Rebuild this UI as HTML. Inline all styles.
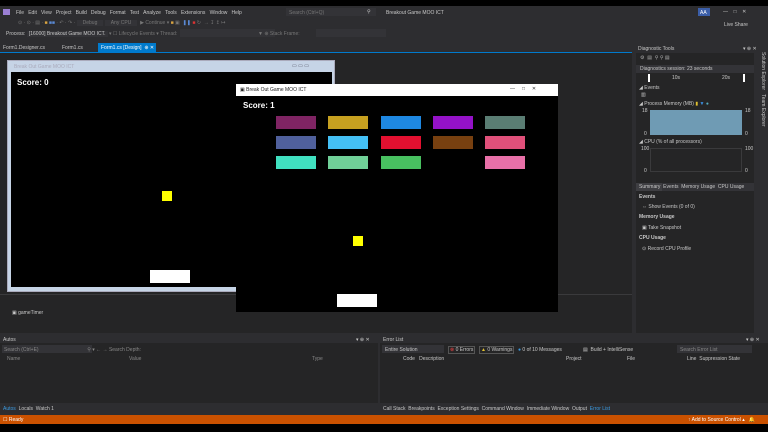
<!DOCTYPE html>
<html><head><meta charset="utf-8"><style>
*{margin:0;padding:0;box-sizing:border-box}
body{width:768px;height:432px;background:#000;position:relative;overflow:hidden;font-family:"Liberation Sans",sans-serif;color:#ccc;font-size:5px}
.a{position:absolute}
.t{position:absolute;white-space:nowrap;font-size:5px;color:#c8c8c8}
.brick{position:absolute;width:40px;height:13px}
</style></head><body>
<!-- top chrome -->
<div class="a" style="left:0;top:6px;width:768px;height:47px;background:#2d2d30"></div>
<div class="a" style="left:3px;top:9px;width:7px;height:6px;background:#9b7fd4"></div>
<div class="t" style="left:16px;top:10px">File&nbsp;&nbsp;&nbsp;Edit&nbsp;&nbsp;&nbsp;View&nbsp;&nbsp;&nbsp;Project&nbsp;&nbsp;&nbsp;Build&nbsp;&nbsp;&nbsp;Debug&nbsp;&nbsp;&nbsp;Format&nbsp;&nbsp;&nbsp;Test&nbsp;&nbsp;&nbsp;Analyze&nbsp;&nbsp;&nbsp;Tools&nbsp;&nbsp;&nbsp;Extensions&nbsp;&nbsp;&nbsp;Window&nbsp;&nbsp;&nbsp;Help</div>
<div class="a" style="left:286px;top:8px;width:90px;height:8px;background:#333337"></div>
<div class="t" style="left:289px;top:10px;color:#777">Search (Ctrl+Q)</div>
<div class="t" style="left:367px;top:9px">⚲</div>
<div class="t" style="left:386px;top:10px">Breakout Game MOO ICT</div>
<div class="a" style="left:698px;top:8px;width:12px;height:8px;background:#3b5ea8"></div>
<div class="t" style="left:700px;top:10px;color:#fff">AA</div>
<div class="t" style="left:723px;top:9px">—&nbsp;&nbsp;&nbsp;&nbsp;□&nbsp;&nbsp;&nbsp;&nbsp;✕</div>
<div class="t" style="left:18px;top:20px;color:#777">⊙ · ⊙ · ▤ · <span style="color:#d9a441">■</span> <span style="color:#5a8ad6">■■</span> · ↶ · ↷ · <span style="background:#333337;padding:0 6px">Debug</span> <span style="background:#333337;padding:0 6px">Any CPU</span>&nbsp; ▶ Continue ▾ <span style="color:#d9a441">■</span> ▣ &nbsp;<span style="color:#5a8ad6">❚❚</span> <span style="color:#d33">■</span> ↻ &nbsp;→ ↧ ↥ ↦</div>
<div class="t" style="left:724px;top:22px">Live Share</div>
<div class="t" style="left:6px;top:31px">Process: <span style="background:#333337;padding:0 2px">[16000] Breakout Game MOO ICT.</span> <span style="color:#777">▾ ☐ Lifecycle Events ▾ Thread:</span></div>
<div class="a" style="left:180px;top:29px;width:95px;height:8px;background:#333337"></div>
<div class="t" style="left:258px;top:31px;color:#777">▼ ⊕ Stack Frame:</div>
<div class="a" style="left:316px;top:29px;width:70px;height:8px;background:#333337"></div>
<div class="t" style="left:3px;top:45px">Form1.Designer.cs</div>
<div class="t" style="left:62px;top:45px">Form1.cs</div>
<div class="a" style="left:98px;top:43px;width:58px;height:9px;background:#007acc"></div>
<div class="t" style="left:101px;top:45px;color:#fff">Form1.cs [Design] &nbsp;⊕ ✕</div>
<div class="a" style="left:0;top:52px;width:632px;height:1px;background:#007acc"></div>
<!-- designer area -->
<div class="a" style="left:0;top:53px;width:632px;height:280px;background:#252526"></div>
<div class="a" style="left:0;top:294px;width:632px;height:1px;background:#3a3a3c"></div>
<div class="t" style="left:12px;top:310px">▣ gameTimer</div>
<!-- form 1 -->
<div class="a" style="left:7px;top:60px;width:328px;height:232px;background:#c6d4e6;border:1px solid #aab"></div>
<div class="t" style="left:14px;top:64px;color:#aab">Break Out Game MOO ICT</div>
<div class="t" style="left:292px;top:63px;color:#556">▭ ▭ ▭</div>
<div class="a" style="left:11px;top:72px;width:321px;height:215px;background:#000"></div>
<div class="t" style="left:17px;top:78px;color:#fff;font-size:8px;font-weight:bold">Score: 0</div>
<div class="a" style="left:162px;top:191px;width:10px;height:10px;background:#ff0"></div>
<div class="a" style="left:150px;top:270px;width:40px;height:13px;background:#fff"></div>
<!-- form 2 (running) -->
<div class="a" style="left:236px;top:84px;width:322px;height:228px;background:#000"></div>
<div class="a" style="left:236px;top:84px;width:322px;height:12px;background:#fff"></div>
<div class="t" style="left:240px;top:87px;color:#222">▣ Break Out Game MOO ICT</div>
<div class="t" style="left:510px;top:86px;color:#333">—&nbsp;&nbsp;&nbsp;&nbsp;&nbsp;□&nbsp;&nbsp;&nbsp;&nbsp;&nbsp;✕</div>
<div class="t" style="left:243px;top:101px;color:#fff;font-size:8px;font-weight:bold">Score: 1</div>
<div class="brick" style="left:276px;top:116px;background:#7f2463"></div>
<div class="brick" style="left:328px;top:116px;background:#c6a020"></div>
<div class="brick" style="left:381px;top:116px;background:#1e88e2"></div>
<div class="brick" style="left:433px;top:116px;background:#9412c8"></div>
<div class="brick" style="left:485px;top:116px;background:#5a7d73"></div>
<div class="brick" style="left:276px;top:136px;background:#50609c"></div>
<div class="brick" style="left:328px;top:136px;background:#44c0f5"></div>
<div class="brick" style="left:381px;top:136px;background:#e31030"></div>
<div class="brick" style="left:433px;top:136px;background:#784010"></div>
<div class="brick" style="left:485px;top:136px;background:#e0507a"></div>
<div class="brick" style="left:276px;top:156px;background:#40e0c0"></div>
<div class="brick" style="left:328px;top:156px;background:#70d098"></div>
<div class="brick" style="left:381px;top:156px;background:#48c060"></div>
<div class="brick" style="left:485px;top:156px;background:#e870a8"></div>
<div class="a" style="left:353px;top:236px;width:10px;height:10px;background:#ff0"></div>
<div class="a" style="left:337px;top:294px;width:40px;height:13px;background:#fff"></div>
<!-- diagnostics -->
<div class="a" style="left:632px;top:43px;width:136px;height:290px;background:#2d2d30"></div>
<div class="a" style="left:636px;top:53px;width:118px;height:280px;background:#252526"></div>
<div class="t" style="left:638px;top:46px">Diagnostic Tools</div>
<div class="t" style="left:743px;top:46px">▾ ⊕ ✕</div>
<div class="t" style="left:640px;top:55px;color:#aaa">⚙ &nbsp;▤ &nbsp;⚲ ⚲ ▤</div>
<div class="a" style="left:636px;top:65px;width:118px;height:8px;background:#333337"></div>
<div class="t" style="left:640px;top:66px">Diagnostics session: 23 seconds</div>
<div class="a" style="left:648px;top:74px;width:2px;height:8px;background:#fff"></div>
<div class="a" style="left:743px;top:74px;width:2px;height:8px;background:#fff"></div>
<div class="t" style="left:672px;top:75px">10s</div><div class="t" style="left:722px;top:75px">20s</div>
<div class="t" style="left:639px;top:85px">◢ Events</div>
<div class="t" style="left:641px;top:92px">▥</div>
<div class="t" style="left:639px;top:101px">◢ Process Memory (MB) <span style="color:#e0c030">▮</span> <span style="color:#3a8ee0">▼</span> <span style="color:#5ab">●</span></div>
<div class="t" style="left:642px;top:108px">18</div><div class="t" style="left:745px;top:108px">18</div>
<div class="a" style="left:650px;top:110px;width:92px;height:25px;background:#6f9bb4"></div>
<div class="t" style="left:644px;top:131px">0</div><div class="t" style="left:745px;top:131px">0</div>
<div class="t" style="left:639px;top:139px">◢ CPU (% of all processors)</div>
<div class="t" style="left:641px;top:146px">100</div><div class="t" style="left:745px;top:146px">100</div>
<div class="a" style="left:650px;top:148px;width:92px;height:24px;border:1px solid #3a3a3c"></div>
<div class="t" style="left:644px;top:168px">0</div><div class="t" style="left:745px;top:168px">0</div>
<div class="a" style="left:636px;top:183px;width:118px;height:8px;background:#333337"></div>
<div class="a" style="left:636px;top:183px;width:26px;height:8px;background:#3e3e42"></div>
<div class="t" style="left:639px;top:184px">Summary&nbsp;&nbsp;Events&nbsp;&nbsp;Memory Usage&nbsp;&nbsp;CPU Usage</div>
<div class="t" style="left:639px;top:194px;font-weight:bold">Events</div>
<div class="t" style="left:642px;top:204px">⇔ Show Events (0 of 0)</div>
<div class="t" style="left:639px;top:214px;font-weight:bold">Memory Usage</div>
<div class="t" style="left:642px;top:225px">▣ Take Snapshot</div>
<div class="t" style="left:639px;top:235px;font-weight:bold">CPU Usage</div>
<div class="t" style="left:642px;top:246px">⊙ Record CPU Profile</div>
<div class="t" style="left:760px;top:52px;writing-mode:vertical-rl">Solution Explorer&nbsp;&nbsp;&nbsp;Team Explorer</div>
<!-- bottom panels -->
<div class="a" style="left:0;top:333px;width:768px;height:82px;background:#2d2d30"></div>
<div class="a" style="left:0;top:343px;width:378px;height:60px;background:#252526"></div>
<div class="a" style="left:380px;top:343px;width:388px;height:60px;background:#252526"></div>
<div class="t" style="left:3px;top:337px">Autos</div>
<div class="t" style="left:356px;top:337px">▾ ⊕ ✕</div>
<div class="a" style="left:2px;top:345px;width:90px;height:8px;background:#333337"></div>
<div class="t" style="left:4px;top:347px;color:#888">Search (Ctrl+E)&nbsp;&nbsp;&nbsp;&nbsp;&nbsp;&nbsp;&nbsp;&nbsp;&nbsp;&nbsp;&nbsp;&nbsp;&nbsp;&nbsp;&nbsp;&nbsp;&nbsp;&nbsp;&nbsp;&nbsp;&nbsp;&nbsp;&nbsp;&nbsp;&nbsp;&nbsp;&nbsp;&nbsp;&nbsp;&nbsp;&nbsp;&nbsp;&nbsp;&nbsp;&nbsp;⚲ ▾ ← → Search Depth:</div>
<div class="t" style="left:7px;top:356px;color:#888">Name</div>
<div class="t" style="left:129px;top:356px;color:#888">Value</div>
<div class="t" style="left:312px;top:356px;color:#888">Type</div>
<div class="t" style="left:3px;top:406px"><span style="color:#3b9ae0">Autos</span>&nbsp;&nbsp;Locals&nbsp;&nbsp;Watch 1</div>
<div class="t" style="left:383px;top:337px">Error List</div>
<div class="t" style="left:746px;top:337px">▾ ⊕ ✕</div>
<div class="a" style="left:382px;top:345px;width:62px;height:8px;background:#333337"></div>
<div class="t" style="left:385px;top:347px">Entire Solution</div>
<div class="t" style="left:448px;top:346px;border:1px solid #555;padding:0 1px"><span style="color:#e44">⊗</span> 0 Errors</div>
<div class="t" style="left:479px;top:346px;border:1px solid #555;padding:0 1px"><span style="color:#e0c030">▲</span> 0 Warnings</div>
<div class="t" style="left:518px;top:347px"><span style="color:#3b9ae0">●</span> 0 of 10 Messages</div>
<div class="t" style="left:583px;top:347px">▤ &nbsp;Build + IntelliSense</div>
<div class="a" style="left:677px;top:345px;width:75px;height:8px;background:#333337"></div>
<div class="t" style="left:680px;top:347px;color:#888">Search Error List</div>
<div class="t" style="left:403px;top:356px">Code&nbsp;&nbsp;&nbsp;Description</div>
<div class="t" style="left:566px;top:356px">Project</div>
<div class="t" style="left:627px;top:356px">File</div>
<div class="t" style="left:687px;top:356px">Line&nbsp;&nbsp;Suppression State</div>
<div class="t" style="left:383px;top:406px">Call Stack&nbsp;&nbsp;Breakpoints&nbsp;&nbsp;Exception Settings&nbsp;&nbsp;Command Window&nbsp;&nbsp;Immediate Window&nbsp;&nbsp;Output&nbsp;&nbsp;<span style="color:#3b9ae0">Error List</span></div>
<!-- status -->
<div class="a" style="left:0;top:415px;width:768px;height:9px;background:#ca5100"></div>
<div class="t" style="left:3px;top:417px;color:#fff">☐ Ready</div>
<div class="t" style="left:688px;top:417px;color:#fff">↑ Add to Source Control ▴&nbsp;&nbsp;&nbsp;🔔</div>
</body></html>
